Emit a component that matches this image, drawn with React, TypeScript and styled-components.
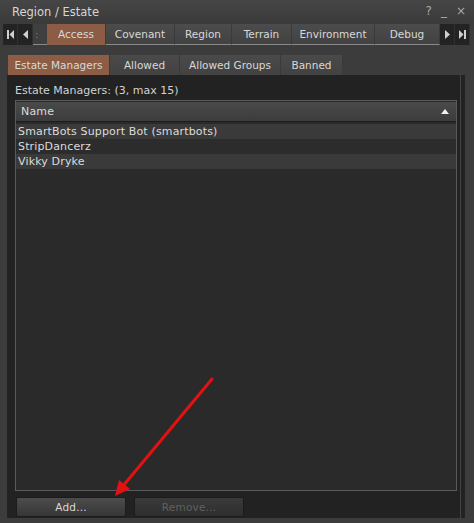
import styled, { createGlobalStyle } from 'styled-components'

const GlobalStyle = createGlobalStyle`
  html, body {
    margin: 0;
    padding: 0;
    background: #3c3c3c;
  }
`

const topTabs = [
  { label: 'Access', width: 59 },
  { label: 'Covenant', width: 69 },
  { label: 'Region', width: 57 },
  { label: 'Terrain', width: 60 },
  { label: 'Environment', width: 83 },
  { label: 'Debug', width: 65 },
]

const subTabs = [
  { label: 'Estate Managers', width: 102 },
  { label: 'Allowed', width: 70 },
  { label: 'Allowed Groups', width: 101 },
  { label: 'Banned', width: 62 },
]

const managers = ['SmartBots Support Bot (smartbots)', 'StripDancerz', 'Vikky Dryke']

const App = () => {
  return (
    <Window>
      <GlobalStyle />
      <TitleBar>
        <Title>Region / Estate</Title>
        <Controls>
          <span>?</span>
          <span>_</span>
          <span>×</span>
        </Controls>
      </TitleBar>

      <TabRow>
        <ScrollGroup>
          <ScrollBtn>
            <svg width="7" height="9" viewBox="0 0 7 9">
              <rect x="0" y="0" width="2" height="9" fill="#cfcfcf" />
              <path d="M7 0 L2.5 4.5 L7 9 Z" fill="#cfcfcf" />
            </svg>
          </ScrollBtn>
          <ScrollBtn>
            <svg width="5" height="9" viewBox="0 0 5 9">
              <path d="M5 0 L0 4.5 L5 9 Z" fill="#cfcfcf" />
            </svg>
          </ScrollBtn>
        </ScrollGroup>
        <TabStub>:</TabStub>
        {topTabs.map((t) => (
          <Tab key={t.label} $active={t.label === 'Access'} $w={t.width}>
            {t.label}
          </Tab>
        ))}
        <ScrollGroup>
          <ScrollBtn>
            <svg width="5" height="9" viewBox="0 0 5 9">
              <path d="M0 0 L5 4.5 L0 9 Z" fill="#cfcfcf" />
            </svg>
          </ScrollBtn>
          <ScrollBtn>
            <svg width="7" height="9" viewBox="0 0 7 9">
              <path d="M0 0 L4.5 4.5 L0 9 Z" fill="#cfcfcf" />
              <rect x="5" y="0" width="2" height="9" fill="#cfcfcf" />
            </svg>
          </ScrollBtn>
        </ScrollGroup>
      </TabRow>

      <SubTabRow>
        {subTabs.map((t) => (
          <SubTab key={t.label} $active={t.label === 'Estate Managers'} $w={t.width}>
            {t.label}
          </SubTab>
        ))}
      </SubTabRow>

      <Panel>
        <Label>Estate Managers: (3, max 15)</Label>
        <List>
          <ListHeader>
            <span>Name</span>
            <SortArrow />
          </ListHeader>
          {managers.map((name, i) => (
            <Row key={name} $odd={i % 2 === 1}>
              {name}
            </Row>
          ))}
        </List>
        <Buttons>
          <Button>Add...</Button>
          <Button disabled>Remove...</Button>
        </Buttons>
      </Panel>

      <Arrow width="474" height="523" viewBox="0 0 474 523">
        <line x1="212" y1="379" x2="123" y2="486" stroke="#e21212" strokeWidth="3" strokeLinecap="round" />
        <path d="M115 496 L119 480 L130 489 Z" fill="#e21212" />
      </Arrow>
    </Window>
  )
}
export default App

const Window = styled.div`
  position: relative;
  width: 474px;
  height: 523px;
  display: flex;
  flex-direction: column;
  background: #3c3c3c;
  font-family: 'DejaVu Sans', 'Liberation Sans', sans-serif;
  font-size: 10.5px;
  color: #d8d8d8;
  overflow: hidden;
`
const TitleBar = styled.div`
  height: 23px;
  display: flex;
  align-items: center;
  justify-content: space-between;
  padding: 0 8px 0 12px;
  background: linear-gradient(#464646, #3a3a3a);
`
const Title = styled.div`
  font-size: 11.5px;
  color: #d6d6d6;
`
const Controls = styled.div`
  display: flex;
  gap: 9px;
  font-size: 12px;
  color: #a8a8a8;
  padding-bottom: 2px;
`
const TabRow = styled.div`
  margin-top: 1px;
  height: 21px;
  display: flex;
  padding-left: 3px;
`
const ScrollGroup = styled.div`
  width: 30px;
  display: flex;
  background: #232323;
`
const ScrollBtn = styled.div`
  flex: 1;
  display: flex;
  align-items: center;
  justify-content: center;
  border-right: 1px solid #303030;
`
const TabStub = styled.div`
  width: 14px;
  background: #3f3f3f;
  border-bottom: 1px solid #8a8a8a;
  color: #777;
  line-height: 20px;
  padding-left: 2px;
  box-sizing: border-box;
`
const Tab = styled.div<{ $active?: boolean; $w: number }>`
  width: ${(p) => p.$w}px;
  display: flex;
  align-items: center;
  justify-content: center;
  box-sizing: border-box;
  background: ${(p) => (p.$active ? '#8c5c44' : 'linear-gradient(#4c4c4c, #424242)')};
  border-right: 1px solid #3a3a3a;
  border-bottom: 1px solid ${(p) => (p.$active ? '#8c5c44' : '#8a8a8a')};
  color: #d8d8d8;
`
const SubTabRow = styled.div`
  margin-top: 10px;
  height: 20px;
  display: flex;
  padding-left: 8px;
`
const SubTab = styled.div<{ $active?: boolean; $w: number }>`
  width: ${(p) => p.$w}px;
  display: flex;
  align-items: center;
  justify-content: center;
  box-sizing: border-box;
  background: ${(p) => (p.$active ? '#8c5c44' : 'linear-gradient(#4a4a4a, #424242)')};
  border-right: 1px solid #3a3a3a;
  color: #d8d8d8;
`
const Panel = styled.div`
  flex: 1;
  margin: 0 9px 5px 7px;
  display: flex;
  flex-direction: column;
  padding: 10px 8px 1px 8px;
  background: #222222;
  box-shadow: inset -4px 0 0 #222, inset -5px 0 0 #444;
`
const Label = styled.div`
  height: 15px;
  line-height: 12px;
  font-size: 11px;
  color: #d2d2d2;
`
const List = styled.div`
  flex: 1;
  border: 1px solid #5a5a5a;
  background: #2a2a2a;
  padding: 1px 0;
  display: flex;
  flex-direction: column;
  font-size: 11px;
  letter-spacing: 0.15px;
`
const ListHeader = styled.div`
  height: 19px;
  display: flex;
  align-items: center;
  justify-content: space-between;
  padding: 0 7px 0 5px;
  margin-bottom: 2px;
  background: linear-gradient(#4a4a4a, #3c3c3c);
  border-bottom: 1px solid #1c1c1c;
  color: #dadada;
`
const SortArrow = styled.div`
  width: 0;
  height: 0;
  border-left: 4px solid transparent;
  border-right: 4px solid transparent;
  border-bottom: 5px solid #f0f0f0;
`
const Row = styled.div<{ $odd?: boolean }>`
  height: 15px;
  line-height: 15px;
  padding-left: 2px;
  background: ${(p) => (p.$odd ? '#2c2c2c' : '#3a3a3a')};
  color: #dcdcdc;
`
const Buttons = styled.div`
  display: flex;
  gap: 8px;
  margin-top: 6px;
  padding-left: 1px;
`
const Button = styled.button`
  width: 110px;
  height: 20px;
  padding: 0;
  font-family: inherit;
  font-size: 10.5px;
  letter-spacing: 0.2px;
  color: #d8d8d8;
  background: linear-gradient(#4c4c4c, #363636);
  border: 1px solid #1c1c1c;
  border-radius: 2px;
  &:disabled {
    color: #606060;
    background: linear-gradient(#3a3a3a, #2e2e2e);
  }
`
const Arrow = styled.svg`
  position: absolute;
  left: 0;
  top: 0;
  pointer-events: none;
`
